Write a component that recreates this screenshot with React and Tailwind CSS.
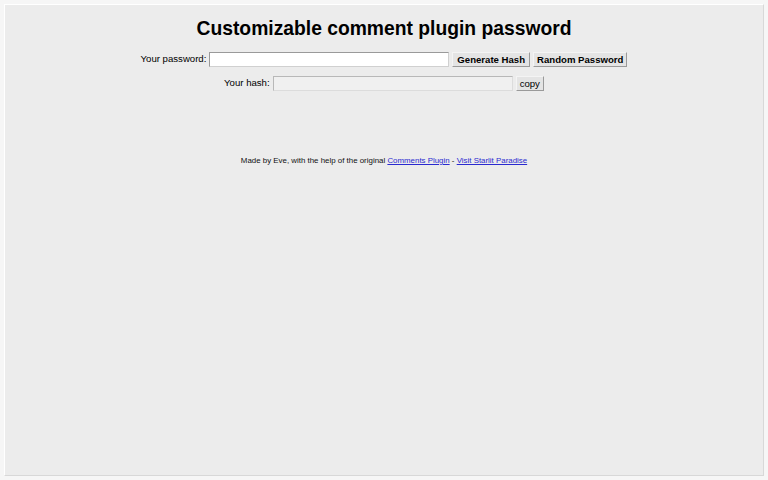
import React from 'react';

const font = { fontFamily: '"Liberation Sans", Arial, sans-serif' };

export default function App() {
  return (
    <div className="h-[480px] w-[768px] bg-[#f6f6f6] p-1" style={font}>
      <div className="flex h-full flex-col items-center border border-t-white border-l-white border-r-[#d8d8d8] border-b-[#d8d8d8] bg-[#ececec] text-black">
        <h1 className="mt-[12px] text-[19.3px] font-bold leading-[23px]">
          Customizable comment plugin password
        </h1>

        <div className="mt-[12px] flex items-center gap-[3px] text-[9.6px]">
          <label>Your password:</label>
          <input
            type="text"
            className="h-[15px] w-[240px] border border-t-[#9a9a9a] border-l-[#9a9a9a] border-r-[#d0d0d0] border-b-[#d0d0d0] bg-white px-1 text-[9.6px] outline-none"
          />
          <button className="h-[15px] border border-t-[#f4f4f4] border-l-[#f4f4f4] border-r-[#9a9a9a] border-b-[#9a9a9a] bg-[#e4e4e4] px-[4px] text-[9.6px] font-bold leading-none">
            Generate Hash
          </button>
          <button className="h-[15px] border border-t-[#f4f4f4] border-l-[#f4f4f4] border-r-[#9a9a9a] border-b-[#9a9a9a] bg-[#e4e4e4] px-[3px] text-[9.6px] font-bold leading-none">
            Random Password
          </button>
        </div>

        <div className="mt-[9px] flex items-center gap-[3px] text-[9.6px]">
          <label>Your hash:</label>
          <input
            type="text"
            readOnly
            className="h-[15px] w-[240px] border border-t-[#b8b8b8] border-l-[#b8b8b8] border-r-[#dcdcdc] border-b-[#dcdcdc] bg-[#f0f0f0] px-1 text-[9.6px] outline-none"
          />
          <button className="h-[15px] border border-t-[#f4f4f4] border-l-[#f4f4f4] border-r-[#9a9a9a] border-b-[#9a9a9a] bg-[#e4e4e4] px-[3px] text-[9.6px] leading-none">
            copy
          </button>
        </div>

        <p className="mt-[65px] text-[7.9px] leading-[10px] text-[#111]">
          Made by Eve, with the help of the original{' '}
          <a href="#" className="text-[#2a2ad0] underline">Comments Plugin</a>
          {' - '}
          <a href="#" className="text-[#2a2ad0] underline">Visit Starlit Paradise</a>
        </p>
      </div>
    </div>
  );
}
